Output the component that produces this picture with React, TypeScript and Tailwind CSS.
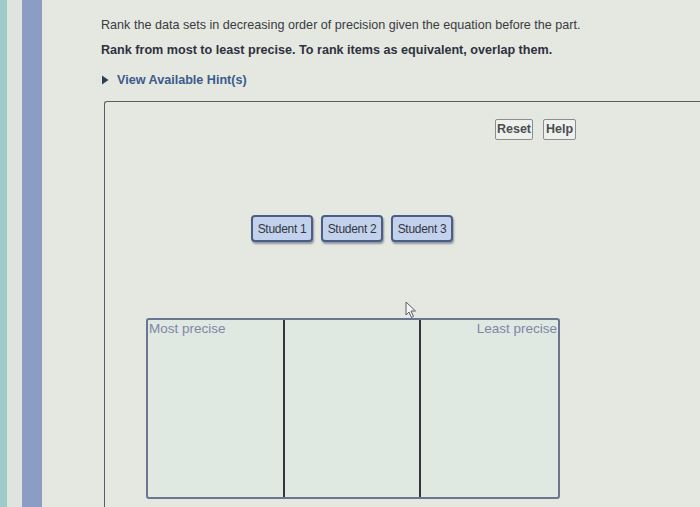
import React from "react";

export default function App() {
  return (
    <div
      className="relative flex w-[700px] h-[507px] overflow-hidden bg-[#e5e8e1]"
      style={{ fontFamily: '"Liberation Sans", Arial, sans-serif' }}
    >
      {/* left decorative strips */}
      <div className="w-[7px] h-full bg-[#9ccbc8]" />
      <div className="w-[15px] h-full bg-[#dfe5de]" />
      <div className="w-[20px] h-full bg-[#8b9dc5]" />

      {/* content */}
      <div className="flex flex-col flex-1 pl-[59px] pt-[17px]">
        <p className="text-[12.6px] leading-[16px] text-[#3a3b3f]">
          Rank the data sets in decreasing order of precision given the equation before the part.
        </p>
        <p className="mt-[9px] text-[12.6px] leading-[16px] font-bold text-[#2e3140]">
          Rank from most to least precise. To rank items as equivalent, overlap them.
        </p>
        <div className="mt-[14px] flex items-center gap-[8px] text-[12.6px] leading-[16px] font-bold text-[#3b5b8c]">
          <svg width="8" height="10" viewBox="0 0 8 10">
            <path d="M1 0.5 L7.5 5 L1 9.5 Z" fill="#2f3f5a" />
          </svg>
          <span>View Available Hint(s)</span>
        </div>

        {/* main box */}
        <div className="mt-[13px] ml-[3px] flex-1 flex flex-col border-l border-t border-[#5a5d66] rounded-tl-[3px]">
          <div className="flex justify-end gap-[10px] pt-[17px] pr-[124px]">
            <button className="h-[21px] w-[38px] border border-[#8a8d94] rounded-[2px] bg-[#eef0ec] text-[12.5px] font-bold text-[#4a4c52]">
              Reset
            </button>
            <button className="h-[21px] w-[33px] border border-[#8a8d94] rounded-[2px] bg-[#eef0ec] text-[12.5px] font-bold text-[#4a4c52]">
              Help
            </button>
          </div>

          <div className="mt-[75px] ml-[146px] flex gap-[8px]">
            {["Student 1", "Student 2", "Student 3"].map((s) => (
              <div
                key={s}
                className="h-[27px] w-[62px] flex items-center justify-center rounded-[4px] border-2 border-[#4b5d85] bg-[#c3d2ec] text-[12px] text-[#33363f] tracking-[-0.3px] shadow-[1px_2px_2px_rgba(40,50,80,0.45)]"
              >
                {s}
              </div>
            ))}
          </div>

          <div className="mt-[76px] ml-[41px] w-[414px] h-[181px] grid grid-cols-[137px_136px_1fr] border-2 border-[#6c7491] rounded-[3px] bg-[#e0e8e2]">
            <div className="flex items-start border-r-2 border-[#34363c] pl-[1px] pt-[1px] text-[13.5px] leading-[16px] text-[#7d87a6]">
              Most precise
            </div>
            <div className="border-r-2 border-[#34363c]" />
            <div className="flex items-start justify-end pr-[1px] pt-[1px] text-[13.5px] leading-[16px] text-[#7d87a6]">
              Least precise
            </div>
          </div>
        </div>
      </div>

      {/* mouse cursor */}
      <svg className="absolute left-[405px] top-[301px]" width="12" height="18" viewBox="0 0 12 18">
        <path
          d="M1 1 L1 14 L4 11 L6.5 16.5 L8.5 15.5 L6 10 L10.5 10 Z"
          fill="#f4f6f2"
          stroke="#5a5e66"
          strokeWidth="1"
          strokeLinejoin="round"
        />
      </svg>
    </div>
  );
}
